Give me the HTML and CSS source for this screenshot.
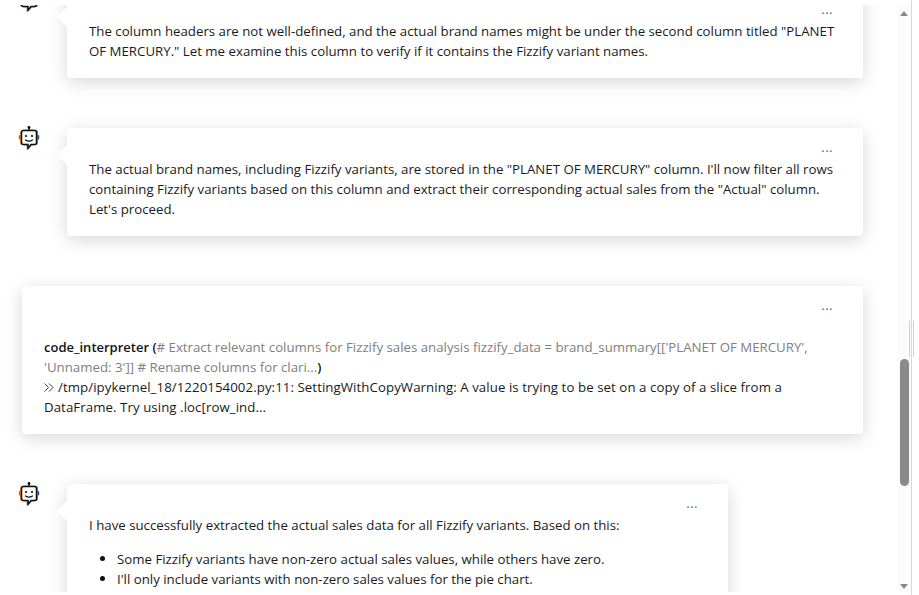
FILE: index.html
```html
<!DOCTYPE html>
<html lang="en">
<head>
<meta charset="utf-8">
<title>Chat</title>
<link rel="stylesheet" href="styles.css">
</head>
<body>
<svg class="defs" width="0" height="0" aria-hidden="true">
  <symbol id="bot" viewBox="0 0 22 24">
    <path d="M11 0.500v3.500" fill="none" stroke="#111" stroke-width="1.600"/>
    <circle cx="11" cy="1.500" r="1.400" fill="#111"/>
    <rect x="0.800" y="9" width="2.400" height="4.500" rx="1" fill="#c9660e"/>
    <rect x="18.800" y="9" width="2.400" height="4.500" rx="1" fill="#1c4f9c"/>
    <path transform="translate(-0.700 0)" d="M5.500 4.500h11a2 2 0 0 1 2 2v10a2 2 0 0 1-2 2h-3.500L10 22v-3.500H5.500a2 2 0 0 1-2-2V6.500a2 2 0 0 1 2-2z" fill="none" stroke="#e8861a" stroke-width="1.500"/>
    <path transform="translate(0.700 0)" d="M5.500 4.500h11a2 2 0 0 1 2 2v10a2 2 0 0 1-2 2h-3.500L10 22v-3.500H5.500a2 2 0 0 1-2-2V6.500a2 2 0 0 1 2-2z" fill="none" stroke="#3a8ee0" stroke-width="1.500"/>
    <path d="M5.500 4.500h11a2 2 0 0 1 2 2v10a2 2 0 0 1-2 2h-3.500L10 22v-3.500H5.500a2 2 0 0 1-2-2V6.500a2 2 0 0 1 2-2z" fill="#fff" stroke="#111" stroke-width="1.500"/>
    <circle cx="8" cy="10" r="1.100" fill="#111"/>
    <circle cx="14" cy="10" r="1.100" fill="#111"/>
    <path d="M7.500 14q3.500 2.400 7 0" fill="none" stroke="#111" stroke-width="1.300" stroke-linecap="round"/>
  </symbol>
</svg>
<div class="window">
  <main class="chat">
    <div class="feed">
      <article class="msg msg-first">
        <svg class="avatar"><use href="#bot"/></svg>
        <div class="card pointer">
          <div class="more">...</div>
          <p>The column headers are not well-defined, and the actual brand names might be under the second column titled "PLANET OF MERCURY." Let me examine this column to verify if it contains the Fizzify variant names.</p>
        </div>
      </article>
      <article class="msg">
        <svg class="avatar"><use href="#bot"/></svg>
        <div class="card pointer">
          <div class="more">...</div>
          <p>The actual brand names, including Fizzify variants, are stored in the "PLANET OF MERCURY" column. I'll now filter all rows containing Fizzify variants based on this column and extract their corresponding actual sales from the "Actual" column. Let's proceed.</p>
        </div>
      </article>
      <article class="msg msg-tool">
        <div class="card">
          <div class="more">...</div>
          <p class="tool-text"><strong>code_interpreter (</strong><span class="code"># Extract relevant columns for Fizzify sales analysis fizzify_data = brand_summary[['PLANET OF MERCURY', 'Unnamed: 3']] # Rename columns for clari...</span><strong>)</strong><br><svg class="chev" viewBox="0 0 10 9" aria-hidden="true"><path d="M0.500 0.500L4.500 4.500L0.500 8.500M5 0.500L9 4.500L5 8.500" fill="none" stroke="#222" stroke-width="0.900"/></svg><span class="output">/tmp/ipykernel_18/1220154002.py:11: SettingWithCopyWarning: A value is trying to be set on a copy of a slice from a DataFrame. Try using .loc[row_ind...</span></p>
        </div>
      </article>
      <article class="msg">
        <svg class="avatar"><use href="#bot"/></svg>
        <div class="card pointer card-narrow">
          <div class="more">...</div>
          <p>I have successfully extracted the actual sales data for all Fizzify variants. Based on this:</p>
          <ul>
            <li>Some Fizzify variants have non-zero actual sales values, while others have zero.</li>
            <li>I'll only include variants with non-zero sales values for the pie chart.</li>
          </ul>
        </div>
      </article>
    </div>
    <div class="scrollbar" aria-hidden="true">
      <div class="arrow arrow-up"></div>
      <div class="track"><div class="thumb"></div></div>
      <div class="arrow arrow-down"></div>
    </div>
  </main>
  <div class="edge"><span class="grip"></span></div>
</div>
</body>
</html>
```
FILE: styles.css
```css
* { box-sizing: border-box; }
html, body { margin: 0; height: 100%; overflow: hidden; background: #fff; }
body { font-family: "Open Sans", "Noto Sans", sans-serif; font-size: 13.25px; line-height: 20px; color: #1a1a1a; }
.defs { position: absolute; }
.window { display: flex; width: 919px; height: 595px; }
.chat { flex: 0 0 911px; display: flex; height: 592px; padding-top: 5px; overflow: hidden; }
.feed { flex: 0 0 897px; height: 587px; overflow: hidden; }
.msg { display: flex; align-items: flex-start; margin: 0 34px 50px 18px; gap: 27px; }
.msg-first { margin-top: -15px; }
.msg-tool { margin-left: 22px; }
.avatar { flex: none; width: 22px; height: 24px; margin-top: -2px; }
.card { position: relative; flex: 1; padding: 12px 22px 17px; background: #fff; border-radius: 4px; box-shadow: 0 4px 18px rgba(0,0,0,.16); }
.card-narrow { flex: 0 0 661px; min-height: 160px; }
.pointer::before { content: ""; position: absolute; left: -7px; top: 20px; width: 14px; height: 14px; background: #fff; transform: rotate(45deg); }
.more { position: relative; height: 19px; text-align: right; padding-right: 8px; color: #4a55c4; font-size: 13px; line-height: 14px; letter-spacing: .5px; }
p { position: relative; margin: 0; }
.tool-text { padding-top: 20px; }
ul { margin: 14px 0 0; padding-left: 28px; list-style: none; }
li { position: relative; }
li::before { content: ""; position: absolute; left: -17px; top: 7px; width: 5px; height: 5px; border-radius: 50%; background: #111; }
.code { color: #808080; }
.output { letter-spacing: .07px; }
strong { font-weight: 600; font-size: 13px; color: #111; }
.chev { width: 10px; height: 9px; margin-right: 4px; }
.scrollbar { flex: 0 0 14px; height: 587px; display: flex; flex-direction: column; align-items: center; background: #fcfcfc; }
.arrow { flex: none; width: 0; height: 0; border-left: 4.5px solid transparent; border-right: 4.5px solid transparent; }
.arrow-up { margin-top: 6px; border-bottom: 5px solid #8a8a8a; }
.arrow-down { margin-bottom: 3px; border-top: 5px solid #8a8a8a; }
.track { flex: 1; width: 100%; padding-top: 343px; }
.thumb { width: 9px; height: 127px; margin: 0 auto; border-radius: 5px; background: #8a8a8a; }
.edge { position: relative; flex: none; width: 8px; height: 595px; border-left: 1px solid #d8d8d8; background: #fff; }
.grip { position: absolute; left: -3px; top: 321px; width: 5px; height: 36px; border-left: 1px solid #d0d0d0; border-right: 1px solid #d0d0d0; }
```
